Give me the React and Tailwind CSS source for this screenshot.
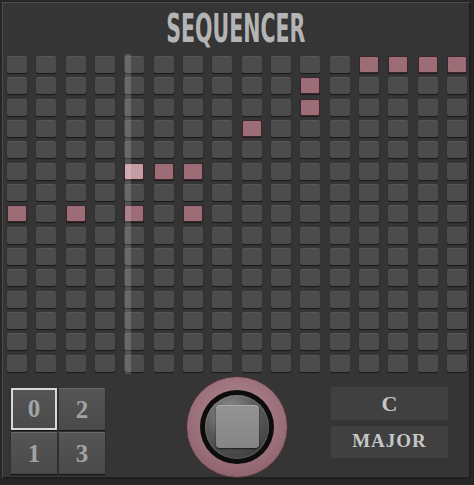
import React from 'react'

const ROWS = 15
const COLS = 16

// row -> active columns
const active = {
  0: [12, 13, 14, 15],
  1: [10],
  2: [10],
  3: [8],
  5: [4, 5, 6],
  7: [0, 2, 4, 6],
}

function Cell({ on, head }) {
  if (on) {
    return (
      <div
        className={
          'h-[17px] w-[20px] rounded-[2px] border border-[#3a262b] shadow-[0_1px_1px_rgba(0,0,0,0.5)] ' +
          (head ? 'bg-[#c59ca4]' : 'bg-[#9c6c77]')
        }
      />
    )
  }
  return (
    <div className="h-[17px] w-[20px] rounded-[2px] bg-[#4c4c4c] shadow-[inset_0_1px_0_rgba(255,255,255,0.06),0_1px_1px_rgba(0,0,0,0.55)]" />
  )
}

function Grid() {
  const cells = []
  for (let r = 0; r < ROWS; r++) {
    for (let c = 0; c < COLS; c++) {
      const on = (active[r] || []).includes(c)
      cells.push(<Cell key={r + '-' + c} on={on} head={on && c === 4 && r === 5} />)
    }
  }
  return (
    <div className="relative ml-[4px] mt-[3px]">
      <div className="grid grid-cols-[repeat(16,20px)] gap-x-[9.33px] gap-y-[4.33px]">{cells}</div>
      {/* playhead */}
      <div className="pointer-events-none absolute left-[118px] top-[-2px] h-[320px] w-[6px] bg-[rgba(255,255,255,0.16)]" />
    </div>
  )
}

function ModeButton({ label, selected }) {
  return (
    <div
      className={
        'flex h-[42px] w-[46px] items-center justify-center bg-gradient-to-b from-[#555555] to-[#4a4a4a] shadow-[0_1px_1px_rgba(0,0,0,0.6)] ' +
        (selected ? 'border-2 border-[#d8d8d8]' : 'border-t border-[#666666]')
      }
    >
      <span className="text-[25px] font-bold leading-none text-[#a3a3a3]" style={{ fontFamily: '"Liberation Serif", serif' }}>
        {label}
      </span>
    </div>
  )
}

function Knob() {
  return (
    <div className="flex h-[102px] w-[102px] items-center justify-center rounded-full border border-[#4a3036] bg-[radial-gradient(circle_at_50%_40%,#b08a92_0%,#9a6e78_60%,#7e5660_100%)]">
      <div className="flex h-[74px] w-[74px] items-center justify-center rounded-full bg-[#0c0c0c]">
        <div className="flex h-[64px] w-[64px] items-center justify-center rounded-full bg-[radial-gradient(circle_at_40%_30%,#9a9a9a_0%,#5a5a5a_45%,#2e2e2e_100%)] shadow-[inset_0_0_2px_rgba(255,255,255,0.4)]">
          <div className="h-[43px] w-[43px] rounded-[4px] bg-gradient-to-b from-[#939393] to-[#858585] shadow-[0_1px_2px_rgba(0,0,0,0.7),inset_0_1px_0_rgba(255,255,255,0.25)]" />
        </div>
      </div>
    </div>
  )
}

export default function App() {
  return (
    <div className="h-[485px] w-[474px] bg-[#262626] p-[2px]">
      <div className="h-[477px] w-[469px] border-l border-t border-r-2 border-b-2 border-l-[#4c4c4c] border-t-[#4c4c4c] border-r-[#1f1f1f] border-b-[#1f1f1f] bg-[#353535]">
        <div className="flex h-[50px] items-center justify-center">
          <h1
            className="scale-x-[0.585] text-[39px] font-bold leading-none text-[#b4b4b4]"
            style={{ fontFamily: '"DejaVu Sans Condensed", "DejaVu Sans", sans-serif' }}
          >
            SEQUENCER
          </h1>
        </div>
        <Grid />
        <div className="mt-[15px] flex items-start pl-[8px]">
          <div className="mt-[1px] grid grid-cols-[46px_46px] gap-[2px]">
            <ModeButton label="0" selected />
            <ModeButton label="2" />
            <ModeButton label="1" />
            <ModeButton label="3" />
          </div>
          <div className="ml-[81px] mt-[-11px]">
            <Knob />
          </div>
          <div className="ml-[43px] flex flex-col gap-[6px]" style={{ fontFamily: '"Liberation Serif", serif' }}>
            <div className="flex h-[33px] w-[117px] items-center justify-center bg-[#404040] text-[22px] font-bold text-[#c6c6c6]">
              C
            </div>
            <div className="flex h-[32px] w-[117px] items-center justify-center bg-[#404040] text-[19px] font-bold tracking-[1px] text-[#c6c6c6]">
              MAJOR
            </div>
          </div>
        </div>
      </div>
    </div>
  )
}
